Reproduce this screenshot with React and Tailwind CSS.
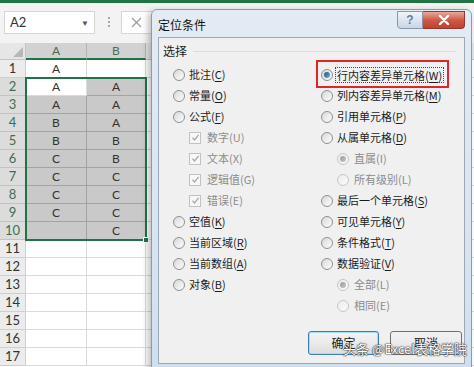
import React from "react";

const CJK = "font-['Microsoft_YaHei','Noto_Sans_CJK_SC',sans-serif]";

const cells = [
  ["A", ""], ["A", "A"], ["A", "A"], ["B", "A"], ["B", "B"],
  ["C", "B"], ["C", "C"], ["C", "C"], ["C", "C"], ["", "C"],
];

const leftItems = [
  { t: "批注", k: "C" }, { t: "常量", k: "O" }, { t: "公式", k: "F" },
  { t: "数字", k: "U", check: true }, { t: "文本", k: "X", check: true },
  { t: "逻辑值", k: "G", check: true }, { t: "错误", k: "E", check: true },
  { t: "空值", k: "K" }, { t: "当前区域", k: "R" }, { t: "当前数组", k: "A" }, { t: "对象", k: "B" },
];

const rightItems = [
  { t: "行内容差异单元格", k: "W", sel: true, focus: true }, { t: "列内容差异单元格", k: "M" },
  { t: "引用单元格", k: "P" }, { t: "从属单元格", k: "D" },
  { t: "直属", k: "I", sub: true, sel: true }, { t: "所有级别", k: "L", sub: true },
  { t: "最后一个单元格", k: "S" }, { t: "可见单元格", k: "Y" }, { t: "条件格式", k: "T" },
  { t: "数据验证", k: "V" }, { t: "全部", k: "L", sub: true, sel: true }, { t: "相同", k: "E", sub: true },
];

const Radio = ({ on, disabled }) => (
  <span className={disabled
    ? "relative w-[12px] h-[12px] shrink-0 rounded-full border border-[#c6c6c6] bg-gradient-to-br from-[#ececec] to-[#fbfbfb] flex items-center justify-center"
    : "relative w-[12px] h-[12px] shrink-0 rounded-full border border-[#8f9092] bg-gradient-to-br from-[#d9d9d9] to-[#fdfdfd] flex items-center justify-center"}>
    {on && (disabled
      ? <span className="w-[6px] h-[6px] rounded-full bg-gradient-to-br from-[#9a9a9a] to-[#c8c8c8]" />
      : <span className="w-[6px] h-[6px] rounded-full bg-gradient-to-br from-[#1c4f7a] to-[#74b6e2]" />)}
  </span>
);

const Check = () => (
  <span className="w-[12px] h-[12px] shrink-0 border border-[#c2c2c2] bg-[#f7f7f7] flex items-center justify-center">
    <svg width="9" height="9" viewBox="0 0 9 9"><path d="M1.5 4.8 L3.6 7 L7.6 1.8" fill="none" stroke="#a9a9a9" strokeWidth="1.3" /></svg>
  </span>
);

const Label = ({ t, k, disabled }) => (
  <span className={disabled ? "text-[#8c8c8c] whitespace-nowrap" : "text-[#1b1b1b] whitespace-nowrap"}>
    {t}(<span className={disabled ? "" : "underline underline-offset-2"}>{k}</span>)
  </span>
);

export default function App() {
  return (
    <div className={`relative w-[474px] h-[367px] overflow-hidden bg-white ${CJK}`}>
      {/* Excel toolbar */}
      <div className="h-[3px] bg-[#217346]" />
      <div className="h-[40px] bg-[#f3f3f3] flex items-start pt-[8px]">
        <div className="ml-[4px] w-[91px] h-[23px] bg-white border border-[#d6d6d6] flex items-center justify-between px-[5px] font-['Lato',sans-serif] text-[13px] text-[#333]">
          <span>A2</span>
          <span className="text-[8px] text-[#555]">▼</span>
        </div>
        <div className="ml-[13px] mt-[6px] flex flex-col gap-[2px]">
          <span className="w-[2px] h-[2px] bg-[#a8a8a8]" />
          <span className="w-[2px] h-[2px] bg-[#a8a8a8]" />
          <span className="w-[2px] h-[2px] bg-[#a8a8a8]" />
        </div>
        <div className="ml-[11px] w-[60px] h-[23px] bg-white border border-[#d6d6d6] flex items-center pl-[9px]">
          <svg width="11" height="11" viewBox="0 0 11 11"><path d="M1 1 L10 10 M10 1 L1 10" stroke="#9b9b9b" strokeWidth="1.2" /></svg>
        </div>
      </div>

      {/* Grid */}
      <div className="font-['Lato',sans-serif] text-[12px]">
        <div className="flex h-[17px]">
          <div className="w-[26px] shrink-0 bg-[#e6e6e6] border-r border-b border-[#c4c4c4] flex items-end justify-end p-[2px]">
            <svg width="10" height="10" viewBox="0 0 10 10"><path d="M10 0 L10 10 L0 10 Z" fill="#b7b7b7" /></svg>
          </div>
          <div className="w-[61px] shrink-0 bg-[#d2d2d2] border-r border-[#b5b5b5] border-b-2 border-b-[#217346] flex items-center justify-center text-[#4b6b56]">A</div>
          <div className="w-[59px] shrink-0 bg-[#d2d2d2] border-r border-[#b5b5b5] border-b-2 border-b-[#217346] flex items-center justify-center text-[#4b6b56]">B</div>
          <div className="flex-1 bg-[#e6e6e6] border-b border-[#c4c4c4]" />
        </div>
        {Array.from({ length: 17 }, (_, i) => {
          const n = i + 1;
          const inSel = n >= 2 && n <= 10;
          const [a, b] = cells[i] || ["", ""];
          const aGray = inSel && n !== 2;
          return (
            <div key={n} className="flex h-[18px]">
              <div className={inSel
                ? "w-[26px] shrink-0 bg-[#dcdcdc] border-r border-b border-[#c2c2c2] text-[#3f6d50] flex items-center justify-center text-[13px]"
                : "w-[26px] shrink-0 bg-[#ececec] border-r border-b border-[#cfcfcf] text-[#333] flex items-center justify-center text-[13px]"}>
                {n}
              </div>
              <div className={aGray
                ? "w-[61px] shrink-0 bg-[#c9c9c9] border-r border-b border-[#a3a3a3] flex items-center justify-center text-[#333]"
                : "w-[61px] shrink-0 bg-white border-r border-b border-[#dadada] flex items-center justify-center text-[#333]"}>
                {a}
              </div>
              <div className={inSel
                ? "w-[59px] shrink-0 bg-[#c9c9c9] border-r border-b border-[#a3a3a3] flex items-center justify-center text-[#333]"
                : "w-[59px] shrink-0 bg-white border-r border-b border-[#dadada] flex items-center justify-center text-[#333]"}>
                {b}
              </div>
              <div className="flex-1 border-b border-[#dadada]" />
            </div>
          );
        })}
      </div>

      {/* selection outline */}
      <div className="absolute left-[25px] top-[77px] w-[122px] h-[164px] border-2 border-[#217346]" />
      <div className="absolute left-[143px] top-[237px] w-[6px] h-[6px] bg-[#217346] border border-white" />

      {/* Dialog */}
      <div className="absolute left-[151px] top-[9px] w-[321px] h-[362px] rounded-t-[6px] bg-gradient-to-b from-[#e3ebf4] via-[#dbe6f2] to-[#cfdff0] border border-[#8a9bb0] shadow-[-3px_2px_6px_rgba(0,0,0,0.25)] flex flex-col">
        <div className="h-[27px] shrink-0 flex items-start">
          <span className="ml-[6px] mt-[6px] text-[12px] text-[#111]">定位条件</span>
          <div className="ml-auto mr-[6px] mt-[1px] flex">
            <div className="w-[26px] h-[18px] rounded-bl-[4px] border border-[#8797ab] bg-gradient-to-b from-[#f1f5fa] to-[#c9d6e5] flex items-center justify-center text-[12px] font-bold text-[#6d7d92] font-['Liberation_Sans',sans-serif]">?</div>
            <div className="w-[42px] h-[18px] rounded-br-[4px] border border-[#8c3a32] border-l-0 bg-gradient-to-b from-[#e9a99b] via-[#cd5a46] to-[#c2402c] flex items-center justify-center">
              <svg width="12" height="10" viewBox="0 0 12 10"><path d="M2 1 L10 9 M10 1 L2 9" stroke="white" strokeWidth="2.4" strokeLinecap="round" /></svg>
            </div>
          </div>
        </div>
        <div className="relative ml-[6px] mr-[6px] flex-1 bg-[#f0f0f0] border border-[#9aa8b8] text-[11px]">
          <div className="flex items-center h-[26px] pl-[4px]">
            <span className="text-[#1b1b1b] text-[12px]">选择</span>
            <div className="ml-[6px] mr-[8px] flex-1 h-px bg-[#dcdcdc]" />
          </div>
          <div className="flex">
            <div className="w-[162px] pl-[14px] flex flex-col">
              {leftItems.map((it, i) => (
                <div key={i} className={it.check ? "h-[21px] flex items-center gap-[6px] pl-[16px]" : "h-[21px] flex items-center gap-[4px]"}>
                  {it.check ? <Check /> : <Radio />}
                  <Label t={it.t} k={it.k} disabled={it.check} />
                </div>
              ))}
            </div>
            <div className="flex flex-col">
              {rightItems.map((it, i) => (
                <div key={i} className={it.sub ? "h-[21px] flex items-center gap-[5px] pl-[16px]" : "h-[21px] flex items-center gap-[4px]"}>
                  <Radio on={it.sel} disabled={it.sub} />
                  {it.focus
                    ? <span className="border border-dotted border-[#444] px-[1px] leading-[14px] -ml-[2px]"><Label t={it.t} k={it.k} /></span>
                    : <Label t={it.t} k={it.k} disabled={it.sub} />}
                </div>
              ))}
            </div>
          </div>

          {/* red annotation box */}
          <div className="absolute left-[157px] top-[22px] w-[133px] h-[28px] border-2 border-[#e3242b]" />

          {/* buttons */}
          <div className="absolute left-[149px] top-[293px] flex gap-[11px] text-[12px]">
            <div className="w-[71px] h-[24px] rounded-[3px] border border-[#3c7fb1] shadow-[inset_0_0_0_1px_#a8dcf3] bg-gradient-to-b from-[#f2f2f2] via-[#ebebeb] to-[#dcdcdc] flex items-center justify-center text-[#1b1b1b]">确定</div>
            <div className="w-[72px] h-[24px] rounded-[3px] border border-[#707070] bg-gradient-to-b from-[#f2f2f2] via-[#ebebeb] to-[#dcdcdc] flex items-center justify-center text-[#1b1b1b]">取消</div>
          </div>
        </div>
        <div className="h-[6px] shrink-0" />
      </div>

      {/* watermark */}
      <div className="absolute left-[343px] top-[340px] text-[13px] leading-[18px] text-white whitespace-nowrap [text-shadow:0_0_1px_#222,0_0_1px_#222,0_0_2px_#555] font-['Noto_Sans_CJK_SC',sans-serif]">
        头条 @Excel表格学院
      </div>
    </div>
  );
}
